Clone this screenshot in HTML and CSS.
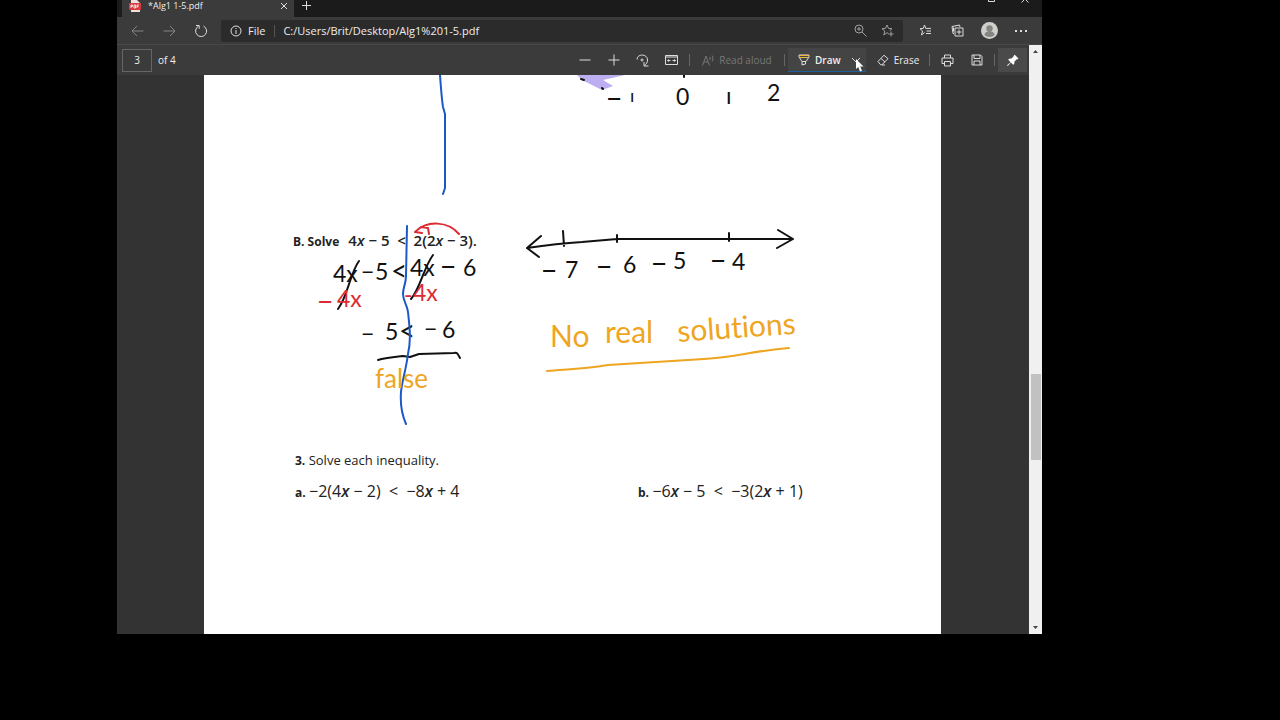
FILE: index.html
```html
<!DOCTYPE html>
<html lang="en">
<head>
<meta charset="utf-8">
<title>*Alg1 1-5.pdf</title>
<link rel="stylesheet" href="styles.css">
</head>
<body>
<div class="browser">
  <header class="tabstrip">
    <div class="tab">
      <svg class="pdf-icon" width="12" height="12" viewBox="0 0 12 12"><path d="M2 0h6l3 3v9H2z" fill="#f3dede"/><rect y="3" width="12" height="7" rx="1" fill="#d83a3f"/><path d="M2 8V5h1.500v1.500H2M5 5v3h1.500V5zM8 8V5h2M8 6.500h1.500" fill="none" stroke="#fff" stroke-width=".8"/></svg>
      <span class="tab-title">*Alg1 1-5.pdf</span>
      <button class="tab-close" aria-label="Close tab"><svg width="8" height="8" viewBox="0 0 8 8"><path d="M1 1l6 6M7 1L1 7"/></svg></button>
    </div>
    <button class="new-tab" aria-label="New tab"><svg width="11" height="11" viewBox="0 0 11 11"><path d="M5.500 1v9M1 5.500h9"/></svg></button>
    <div class="window-controls">
      <svg width="8" height="3" viewBox="0 0 8 3"><path d="M.5 0v1.500h6V0"/></svg>
      <svg width="8" height="3" viewBox="0 0 8 3"><path d="M3 0L.5 2.500M5 0l2.500 2.500"/></svg>
    </div>
  </header>

  <nav class="address-row">
    <button class="nav-button dim" aria-label="Back"><svg width="13" height="12" viewBox="0 0 13 12"><path d="M12.500 6H1M6 1L1 6l5 5"/></svg></button>
    <button class="nav-button dim" aria-label="Forward"><svg width="13" height="12" viewBox="0 0 13 12"><path d="M.5 6H12M7 1l5 5-5 5"/></svg></button>
    <button class="nav-button" aria-label="Refresh"><svg width="14" height="14" viewBox="0 0 14 14"><path d="M4.500 2.200A5.500 5.500 0 1 0 9.500 2.100M2 1.500h3.200v3.300"/></svg></button>
    <div class="address">
      <svg width="12" height="12" viewBox="0 0 12 12"><circle cx="6" cy="6" r="5"/><path d="M6 5v4M6 3v1"/></svg>
      <span class="scheme">File</span>
      <input class="url" type="text" aria-label="Address" value="C:/Users/Brit/Desktop/Alg1%201-5.pdf">
      <button class="address-button" aria-label="Zoom"><svg width="13" height="13" viewBox="0 0 13 13"><circle cx="5" cy="5" r="4"/><path d="M8 8l4.500 4.500M3 5h4M5 3v4"/></svg></button>
      <button class="address-button" aria-label="Add to favorites"><svg width="13" height="13" viewBox="0 0 13 13"><path d="M7.500 9.500L6 8.700 2.800 11l1-4L1 4.700l3.500-.3L6 1l1.500 3.400 3.500.3-2.300 2M10 7.500v5M7.500 10h5"/></svg></button>
    </div>
    <button class="nav-button" aria-label="Favorites"><svg width="13" height="13" viewBox="0 0 13 13"><path d="M5.500 8.500L2.500 11l1-4L1 4.700l3.300-.3L5.500 1l1.300 3.400H12M7.500 7H12M7 9.500h5"/></svg></button>
    <button class="nav-button" aria-label="Collections"><svg width="13" height="13" viewBox="0 0 13 13"><path d="M4 4h8v8H4zM8 5.500v5M5.500 8h5M3 9.500H2L1 2.500 8.500 1l.5 2M2.500 3.500v4"/></svg></button>
    <button class="nav-button" aria-label="Profile"><svg width="17" height="17" viewBox="0 0 17 17"><circle class="solid" cx="8.500" cy="8.500" r="8.500" fill="#cfcfcb"/><circle class="solid" cx="8.500" cy="6.500" r="3.200" fill="#858583"/><path class="solid" d="M3.500 13c0-5 10-5 10 0-2 2.500-8 2.500-10 0z" fill="#858583"/></svg></button>
    <button class="nav-button" aria-label="Settings and more"><svg width="12" height="4" viewBox="0 0 12 4"><path class="solid" d="M0 1h2v2H0zM5 1h2v2H5zM10 1h2v2h-2z" fill="#ddd"/></svg></button>
  </nav>

  <div class="content">
    <div class="pane">
      <div class="toolbar">
        <input class="page-number" type="text" aria-label="Page number" value="3">
        <span class="page-count">of 4</span>
        <div class="tools">
          <button class="tool" aria-label="Zoom out"><svg width="12" height="12" viewBox="0 0 12 12"><path d="M.5 6h11"/></svg></button>
          <button class="tool" aria-label="Zoom in"><svg width="12" height="12" viewBox="0 0 12 12"><path d="M.5 6h11M6 .5v11"/></svg></button>
          <button class="tool" aria-label="Rotate"><svg width="13" height="13" viewBox="0 0 13 13"><path d="M1 5.500C1-.5 11.500-.5 11.500 6c0 2.500-1 4-3 5.500M8 8v4h4.500"/><circle cx="6" cy="6" r="1"/></svg></button>
          <button class="tool" aria-label="Fit to width"><svg width="13" height="12" viewBox="0 0 13 12"><path d="M.5 1.500h12v9H.5zM.5 3h12M2.500 6.500h3M7.500 6.500h3M4 5.500l-1.500 1L4 7.500M9 5.500l1.500 1-1.500 1"/></svg></button>
          <span class="divider"></span>
          <button class="tool read" disabled><svg width="12" height="12" viewBox="0 0 12 12"><path d="M.5 11.500L4 2l3.500 9.500M2 8h4M8 3v3M10 1.500c1.300 1.500 1.300 4 0 6"/></svg>Read aloud</button>
          <span class="divider"></span>
          <button class="tool draw"><svg width="12" height="12" viewBox="0 0 12 12"><path d="M1 1h10v2L8 7.500H4L1 3zM4 7.500V11l3.500-1V7.500"/><path d="M1 1.500h10M2 3.500h8" class="nib"/></svg>Draw
            <span class="draw-more"><svg width="10" height="6" viewBox="0 0 10 6"><path d="M1 1l4 4 4-4"/></svg>
              <svg class="pointer" width="9" height="13" viewBox="0 0 9 13"><path class="solid" d="M1 0v10l2.300-2 1.700 4.500 2-.8-1.800-4.200h3.300z" fill="#fff"/></svg></span>
          </button>
          <button class="tool erase"><svg width="12" height="12" viewBox="0 0 12 12"><path d="M1 7.500L7 1.200l4 3.500-6 6H3.500zM4 4.500l4 3.500M5 11h3"/></svg>Erase</button>
          <span class="divider"></span>
          <button class="tool" aria-label="Print"><svg width="13" height="13" viewBox="0 0 13 13"><path d="M3.500 4V1h6v3M3.500 9.500H1V4h11v5.500H9.500M3.500 7.500h6V12h-6z"/></svg></button>
          <button class="tool" aria-label="Save"><svg width="12" height="12" viewBox="0 0 12 12"><path d="M1 1h8.500L11 2.500V11H1zM3 1v3.500h6V1M3 11V7h6v4"/></svg></button>
          <span class="divider"></span>
          <button class="tool pin" aria-label="Unpin toolbar"><svg width="12" height="12" viewBox="0 0 12 12"><path class="solid" d="M7.500.5l4 4-1 .8-1 .2-2 2-.3 2.500-1 .8-2.400-2.400L.8 12 0 11.200l3.600-3L1.200 5.800l.8-1 2.500-.3 2-2z" fill="#fff"/></svg></button>
        </div>
      </div>

      <main class="viewer">
        <article class="sheet">
          <h2 class="example"><b>B. Solve</b> <span class="math">4<i>x</i> − 5&nbsp; &lt;&nbsp; 2(2<i>x</i> − 3).</span></h2>
          <p class="prompt"><b>3.</b> Solve each inequality.</p>
          <div class="exercises">
            <p><b>a.</b> <span class="math">−2(4<i>x</i> − 2)&nbsp; &lt;&nbsp; −8<i>x</i> + 4</span></p>
            <p><b>b.</b> <span class="math">−6<i>x</i> − 5&nbsp; &lt;&nbsp; −3(2<i>x</i> + 1)</span></p>
          </div>
          <svg class="ink" viewBox="204 75 737 559">
            <path class="highlight" d="M577 75h48l-22 5 10 6-11 4-20-10z"/>
            <g class="black">
              <path d="M581 79l3 1M602 88l1 1M684 75v2"/>
              <text x="606" y="109" class="large">−</text><text x="630" y="102" class="small">ı</text><text x="676" y="105">0</text><text x="726" y="104">ı</text><text x="767" y="101">2</text>
              <path d="M527 248c20-3 38-5 55-6l35-3h175M541 236l-14 12 12 9M563 231l1 15M617 235v7M729 233v8M778 230l15 9-16 9"/>
              <text x="541" y="281" class="large">−</text><text x="565" y="278">7</text>
              <text x="596" y="277" class="large">−</text><text x="623" y="273">6</text>
              <text x="651" y="274" class="large">−</text><text x="673" y="269">5</text>
              <text x="710" y="271" class="large">−</text><text x="732" y="270">4</text>
              <text x="333" y="282">4x</text><text x="361" y="280">−</text><text x="375" y="280">5</text><text x="391" y="281" class="large">&lt;</text>
              <text x="410" y="276">4x</text><text x="440" y="277" class="large">−</text><text x="463" y="276">6</text>
              <path d="M359 261c-9 12-11 35-21 48M433 255c-9 12-13 34-22 44"/>
              <text x="361" y="342">−</text><text x="385" y="340">5</text><text x="399" y="341" class="large">&lt;</text><text x="424" y="337">−</text><text x="442" y="338">6</text>
              <path d="M378 360c9-3 18-3 25-4l7 1 9-3 35-1c3-1 4 1 6 5"/>
            </g>
            <g class="red">
              <path d="M415 232c12-12 33-11 44 2M415 232l6-5 7 1 1 6M415 232l7 1"/>
              <text x="317" y="312" class="large">−</text><text x="337" y="307">4x</text><text x="404" y="303">-</text><text x="413" y="301">4x</text>
            </g>
            <path class="blue" d="M440 75c1 14 2 26 3 32l2 7v74l-2 6M407 226l-1 50c0 8-3 11-3 18 0 7 4 10 5 18 2 18 3 29 0 42-2 16-6 27-7 38-1 13 2 25 5 32"/>
            <g class="gold">
              <text x="375" y="388" class="word">false</text>
              <text x="550" y="347" class="answer">No</text><text x="605" y="343" class="answer">real</text>
              <text x="678" y="342" class="answer" transform="rotate(-4 678 342)">solutions</text>
              <path d="M547 371c25-2 36-2 61-6l96-6c33-2 48-8 85-11"/>
            </g>
          </svg>
        </article>
      </main>
    </div>

    <div class="scrollbar">
      <svg width="7" height="5" viewBox="0 0 7 5"><path class="solid" d="M1 4l2.500-3L6 4z" fill="#444"/></svg>
      <div class="track"><div class="thumb"></div></div>
      <svg width="7" height="5" viewBox="0 0 7 5"><path class="solid" d="M1 1l2.500 3L6 1z" fill="#444"/></svg>
    </div>
  </div>
</div>
</body>
</html>
```
FILE: styles.css
```css
* { box-sizing: border-box; }

body {
  margin: 0;
  min-height: 100vh;
  display: flex;
  padding: 0 238px 86px 117px;
  background: #000;
  color: #eee;
  font: 11px "Open Sans", "Noto Sans", sans-serif;
}

button, input {
  border: 0;
  padding: 0;
  margin: 0;
  background: none;
  color: inherit;
  font: inherit;
}

svg { flex: none; }

.browser {
  flex: 1;
  min-width: 0;
  display: flex;
  flex-direction: column;
  background: #3b3b3b;
}

.browser svg { fill: none; stroke: #ddd; }
.browser .solid { stroke: none; }

.tabstrip {
  display: flex;
  height: 17px;
  padding-left: 5px;
  background: #1b1b1b;
}

.tab {
  display: flex;
  align-items: center;
  width: 172px;
  padding: 0 6px 6px 7px;
  background: #3b3b3b;
}

.browser .pdf-icon { stroke: none; }
.tab-title { flex: 1; margin-left: 7px; font-size: 9px; line-height: 12px; }
.tab-close, .new-tab { display: flex; align-items: center; }
.new-tab { margin-left: 7px; padding-bottom: 6px; }
.window-controls { display: flex; gap: 25px; margin-left: auto; padding-right: 13px; }

.address-row {
  display: flex;
  align-items: center;
  height: 28px;
  padding: 0 5px 0 4px;
  border-bottom: 1px solid #484848;
}

.nav-button {
  display: flex;
  align-items: center;
  justify-content: center;
  width: 32px;
  height: 24px;
}

.dim { opacity: .45; }

.address {
  flex: 1;
  min-width: 0;
  display: flex;
  align-items: center;
  height: 22px;
  margin: 0 6px 0 4px;
  padding: 0 2px 0 9px;
  border-radius: 2px;
  background: #2b2b2b;
}

.scheme {
  margin-left: 6px;
  padding-right: 9px;
  border-right: 1px solid #555;
  line-height: 12px;
}

.url { flex: 1; min-width: 0; margin-left: 8px; }
.address-button { display: flex; justify-content: center; width: 27px; opacity: .65; }

.content { flex: 1; display: flex; }
.pane { flex: 1; min-width: 0; display: flex; flex-direction: column; background: #333; }

.toolbar {
  display: flex;
  align-items: center;
  height: 30px;
  padding: 0 2px 0 5px;
  background: #3b3b3b;
  font-size: 10px;
}

.page-number {
  width: 30px;
  height: 23px;
  border: 1px solid #666;
  text-align: center;
}

.page-count { margin-left: 6px; }
.tools { display: flex; align-items: center; margin-left: auto; }

.tool {
  display: flex;
  align-items: center;
  justify-content: center;
  width: 29px;
  height: 24px;
}

.divider { width: 1px; height: 12px; margin: 0 3px; background: #666; }

.read { width: 88px; gap: 5px; color: #777; }
.browser .read svg { stroke: #777; }

.draw {
  justify-content: flex-start;
  width: 78px;
  padding-left: 10px;
  gap: 5px;
  border-bottom: 1px solid #1d5f9f;
  background: #444;
  font-weight: 600;
}

.browser .nib { stroke: #e8b93c; }
.draw-more { position: relative; display: flex; margin-left: auto; padding-right: 5px; }
.pointer { position: absolute; left: 4px; top: 2px; }
.erase { width: 56px; gap: 5px; margin-left: 4px; }
.pin { background: #4a4a4a; }

.viewer { flex: 1; display: flex; justify-content: center; padding-right: 1px; }

.sheet {
  position: relative;
  flex: 0 1 737px;
  padding: 156px 88px 0 89px;
  background: #fff;
  color: #222;
  font: 13px/18px "Open Sans", "Noto Sans", sans-serif;
}

.sheet h2, .sheet p { margin: 0; }
.example { font-size: 12px; line-height: 18px; font-weight: 600; }
.example .math { margin-left: 6px; font-size: 15px; }
.sheet b { font-size: 12px; font-weight: 700; }
.prompt { padding: 200px 0 0 2px; }
.exercises { display: grid; grid-template-columns: 343px 1fr; padding: 12px 0 0 2px; font-weight: 500; }
.exercises .math { font-size: 16px; }
.exercises i { font-weight: 600; }

.ink {
  position: absolute;
  left: 0;
  top: 0;
  width: 100%;
  font-family: Lato, "Open Sans", sans-serif;
  font-size: 23px;
  font-variant-ligatures: none;
  stroke-linecap: round;
  stroke-linejoin: round;
}

.browser .ink { stroke: none; }
.ink path { stroke-width: 2px; }
.ink text { stroke: none; }
.black path { stroke: #111; }
.black text { fill: #111; }
.red path { stroke: #dc2b32; }
.red text { fill: #dc2b32; }
.gold path { stroke: #eea51f; }
.gold text { fill: #eea51f; }
.ink .blue { stroke: #1c58c7; }
.ink .highlight { fill: #bcaef0; stroke: none; }
.ink .small { font-size: 18px; }
.ink .large { font-size: 28px; }
.ink .word { font-size: 26px; }
.ink .answer { font-size: 30px; }

.scrollbar {
  display: flex;
  flex-direction: column;
  align-items: center;
  width: 13px;
  padding: 4px 1px;
  background: #f0f0f0;
}

.track { flex: 1; width: 10px; padding-top: 320px; }
.thumb { height: 86px; background: #c1c1c1; }
```
